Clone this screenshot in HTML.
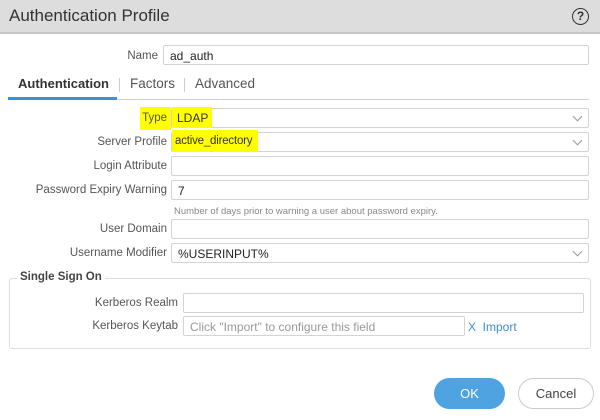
<!DOCTYPE html>
<html><head><style>
*{box-sizing:border-box;margin:0;padding:0}
body{width:600px;height:420px;background:#fff;font-family:"Liberation Sans",sans-serif;position:relative;overflow:hidden;color:#333}
.a{position:absolute}
.hdr{left:0;top:0;width:600px;height:34px;background:#dddddd;border-bottom:2px solid #c8c8c8}
.title{left:9px;top:6px;font-size:17px;color:#333}
.lbl{font-size:11.5px;color:#555;text-align:right;white-space:nowrap}
.in{border:1px solid #d3d3d3;border-radius:2px;background:#fff;height:21px;font-size:12px;padding:3px 6px;color:#222}
.chev{position:absolute;right:0;top:0;width:20px;height:18px}
.chev:after{content:"";position:absolute;left:6px;top:4px;width:6px;height:6px;border-right:1px solid #999;border-bottom:1px solid #999;transform:rotate(45deg)}
.hl{background:#ffff00}
</style></head><body>
<div class="a hdr"></div>
<div class="a title">Authentication Profile</div>
<div class="a" style="left:572px;top:8px;width:17px;height:17px;border:1.5px solid #333;border-radius:50%;font-size:12px;font-weight:bold;text-align:center;line-height:14px">?</div>

<div class="a lbl" style="right:442px;top:50px">Name</div>
<div class="a in" style="left:163px;top:45px;width:426px;height:20px">ad_auth</div>

<div class="a" style="left:18px;top:76px;font-size:13px;font-weight:bold;color:#333">Authentication</div>
<div class="a" style="left:119px;top:78px;width:1px;height:14px;background:#ccc"></div>
<div class="a" style="left:130px;top:76px;font-size:13.5px;color:#555">Factors</div>
<div class="a" style="left:184px;top:78px;width:1px;height:14px;background:#ccc"></div>
<div class="a" style="left:195px;top:76px;font-size:13.5px;color:#555">Advanced</div>
<div class="a" style="left:8px;top:99px;width:581px;height:1px;background:#d0d0d0"></div>
<div class="a" style="left:8px;top:97px;width:109px;height:3px;background:#3c8fd8"></div>

<div class="a hl" style="left:140px;top:107px;width:31px;height:23px"></div>
<div class="a lbl" style="right:433px;top:112px">Type</div>
<div class="a in" style="left:171px;top:108px;width:418px;height:20px"><span class="chev"></span></div>
<div class="a hl" style="left:172px;top:107px;width:40px;height:21px"></div>
<div class="a" style="left:177px;top:111px;font-size:12px">LDAP</div>

<div class="a lbl" style="right:433px;top:136px">Server Profile</div>
<div class="a in" style="left:171px;top:132px;width:418px;height:20px"><span class="chev"></span></div>
<div class="a hl" style="left:172px;top:130px;width:86px;height:22px"></div>
<div class="a" style="left:175px;top:135px;font-size:11.5px;letter-spacing:-0.2px">active_directory</div>

<div class="a lbl" style="right:433px;top:160px">Login Attribute</div>
<div class="a in" style="left:171px;top:156px;width:418px;height:20px"></div>
<div class="a lbl" style="right:433px;top:184px">Password Expiry Warning</div>
<div class="a in" style="left:171px;top:180px;width:418px;height:20px">7</div>
<div class="a" style="left:174px;top:206px;font-size:9.5px;color:#888">Number of days prior to warning a user about password expiry.</div>
<div class="a lbl" style="right:433px;top:223px">User Domain</div>
<div class="a in" style="left:171px;top:219px;width:418px;height:20px"></div>
<div class="a lbl" style="right:433px;top:247px">Username Modifier</div>
<div class="a in" style="left:171px;top:243px;width:418px;height:20px">%USERINPUT%<span class="chev"></span></div>

<div class="a" style="left:9px;top:278px;width:582px;height:71px;border:1px solid #ddd;border-radius:3px"></div>
<div class="a" style="left:17px;top:271px;padding:0 3px;background:#fff;font-size:11.5px;font-weight:bold;color:#444">Single Sign On</div>
<div class="a lbl" style="right:422px;top:297px">Kerberos Realm</div>
<div class="a in" style="left:183px;top:293px;width:401px;height:20px"></div>
<div class="a lbl" style="right:422px;top:320px">Kerberos Keytab</div>
<div class="a in" style="left:183px;top:316px;width:282px;height:20px;color:#999">Click "Import" to configure this field</div>
<div class="a" style="left:468px;top:320px;font-size:12px;color:#3c8fd8">X&nbsp; Import</div>

<div class="a" style="left:434px;top:378px;width:71px;height:31px;background:#4ea3e0;border-radius:16px;color:#fff;font-size:13px;text-align:center;line-height:31px">OK</div>
<div class="a" style="left:518px;top:378px;width:76px;height:31px;border:1px solid #ccc;border-radius:16px;color:#444;font-size:13px;text-align:center;line-height:29px">Cancel</div>
</body></html>
